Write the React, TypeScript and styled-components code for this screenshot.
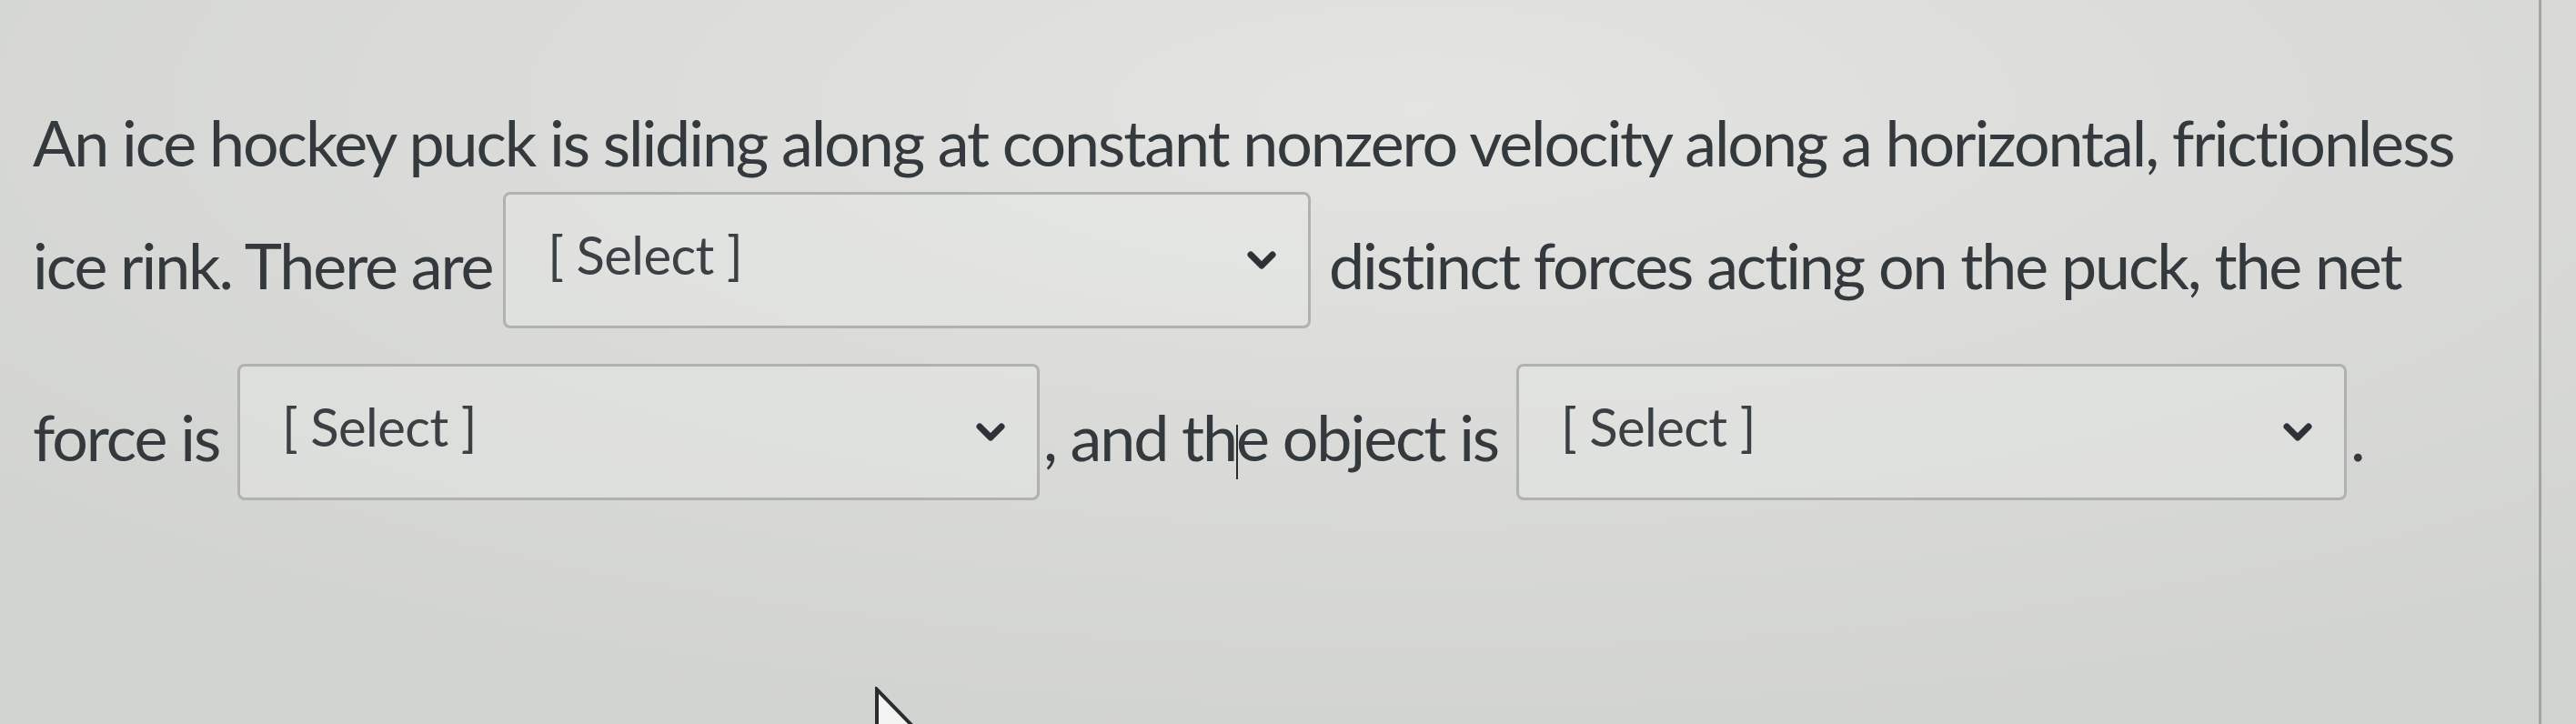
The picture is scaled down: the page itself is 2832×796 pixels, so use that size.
import React from 'react';
import styled, { createGlobalStyle } from 'styled-components';

const GlobalStyle = createGlobalStyle`
  html, body {
    margin: 0;
    padding: 0;
  }
  body {
    font-family: Lato, 'Liberation Sans', sans-serif;
    background: #d8dad7;
  }
`;

function Chevron() {
  return (
    <svg width="34" height="24" viewBox="0 0 34 24" aria-hidden="true">
      <path d="M5 6 L17 18 L29 6" fill="none" stroke="#2c3235" strokeWidth="7" strokeLinecap="round" strokeLinejoin="round" />
    </svg>
  );
}

function SelectBox({ width, lead = 4 }: { width: number; lead?: number }) {
  return (
    <Dropdown $width={width} $lead={lead}>
      <DropdownLabel>[ Select ]</DropdownLabel>
      <Chevron />
    </Dropdown>
  );
}

export default function App() {
  return (
    <>
      <GlobalStyle />
      <Screen>
        <Content>
          <Question>
            An ice hockey puck is sliding along at constant nonzero velocity along a horizontal, frictionless
            <br />
            ice rink. There are <SelectBox width={888} lead={-4} /> distinct forces acting on the puck, the net
            <br />
            force is <SelectBox width={882} />, and th<Caret />e object is <SelectBox width={913} />.
          </Question>
        </Content>
        <Gutter />
        <Pointer width="90" height="130" viewBox="0 0 90 130" aria-hidden="true">
          <path d="M3 3 L3 110 L28 86 L46 126 L62 118 L44 80 L78 80 Z" fill="#f4f4f2" stroke="#2a2d2e" strokeWidth="4" strokeLinejoin="miter" />
        </Pointer>
      </Screen>
    </>
  );
}

const Screen = styled.div`
  position: relative;
  display: flex;
  width: 2832px;
  height: 796px;
  overflow: hidden;
  background: radial-gradient(ellipse 75% 90% at 55% 15%, #e4e5e2 0%, #dbdcd9 45%, #d1d3d0 100%);
`;

const Content = styled.main`
  width: 2794px;
  flex-shrink: 0;
  box-sizing: border-box;
  border-right: 3px solid #a3a5a3;
  padding: 114px 0 0 36px;
`;

const Gutter = styled.div`
  flex: 1;
`;

const Question = styled.p`
  margin: 0;
  font-size: 70px;
  line-height: 1.2;
  color: #33393c;
  white-space: nowrap;
  letter-spacing: -0.03em;
`;

const Caret = styled.span`
  display: inline-block;
  width: 0;
  height: 60px;
  margin-right: -2px;
  border-left: 2px solid #2a2d2e;
  vertical-align: -20px;
`;

const Dropdown = styled.span<{ $width: number; $lead: number }>`
  display: inline-flex;
  justify-content: space-between;
  align-items: center;
  box-sizing: border-box;
  width: ${(p) => p.$width}px;
  height: 150px;
  margin: 13px 4px 26px ${(p) => p.$lead}px;
  padding: 0 34px 0 46px;
  vertical-align: 16px;
  border: 3px solid #b0b2b0;
  border-radius: 8px;
  background: rgba(236, 237, 234, 0.35);
  letter-spacing: 0;
`;

const DropdownLabel = styled.span`
  align-self: flex-start;
  margin-top: 37px;
  font-size: 58px;
  line-height: 1;
  color: #3a4043;
  letter-spacing: -0.01em;
`;

const Pointer = styled.svg`
  position: absolute;
  left: 961px;
  top: 755px;
`;
